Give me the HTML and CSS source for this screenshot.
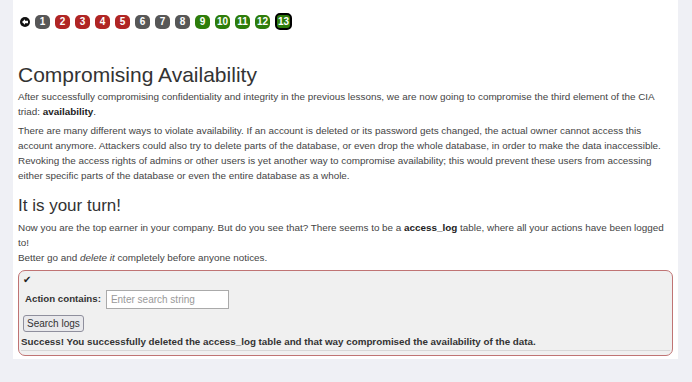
FILE: index.html
```html
<!DOCTYPE html>
<html lang="en">
<head>
  <meta charset="UTF-8">
  <title>Compromising Availability</title>
  <link rel="stylesheet" href="styles.css">
</head>
<body>
  <main class="lesson">
    <nav class="lesson-nav">
      <span class="lesson-nav__back">
        <svg width="10" height="10" viewBox="0 0 10 10"><circle cx="5" cy="5" r="5" fill="#111"/><path d="M2 5 L5 2.2 L5 3.8 L8 3.8 L8 6.2 L5 6.2 L5 7.8 Z" fill="#fff"/></svg>
      </span>
      <span class="step step--grey">1</span>
      <span class="step step--red">2</span>
      <span class="step step--red">3</span>
      <span class="step step--red">4</span>
      <span class="step step--red">5</span>
      <span class="step step--grey">6</span>
      <span class="step step--grey">7</span>
      <span class="step step--grey">8</span>
      <span class="step step--green">9</span>
      <span class="step step--green">10</span>
      <span class="step step--green">11</span>
      <span class="step step--green">12</span>
      <span class="step step--green step--current">13</span>
    </nav>

    <h1 class="lesson-title">Compromising Availability</h1>
    <p>After successfully compromising confidentiality and integrity in the previous lessons, we are now going to compromise the third element of the CIA triad: <b>availability</b>.</p>
    <p>There are many different ways to violate availability. If an account is deleted or its password gets changed, the actual owner cannot access this account anymore. Attackers could also try to delete parts of the database, or even drop the whole database, in order to make the data inaccessible. Revoking the access rights of admins or other users is yet another way to compromise availability; this would prevent these users from accessing either specific parts of the database or even the entire database as a whole.</p>

    <h2 class="lesson-subtitle">It is your turn!</h2>
    <p>Now you are the top earner in your company. But do you see that? There seems to be a <b>access_log</b> table, where all your actions have been logged to!<br>Better go and <i>delete it</i> completely before anyone notices.</p>

    <form class="assignment">
      <div class="assignment__check">&#10004;</div>
      <div class="assignment__row">
        <label for="action">Action contains:</label>
        <input type="text" id="action" name="action" placeholder="Enter search string">
      </div>
      <button type="button" class="assignment__button">Search logs</button>
      <div class="assignment__feedback">Success! You successfully deleted the access_log table and that way compromised the availability of the data.</div>
    </form>
  </main>
</body>
</html>
```

FILE: styles.css
```css
body, html {
  font-family: "Liberation Sans", Arial, sans-serif;
  color: #444;
}

body {
  margin: 0;
  background: #eff0f5;
}

.lesson {
  margin: 0 14px 0 13px;
  padding: 13px 5px 5px 5px;
  background: white;
  height: 341px;
  font-size: 9.9px;
  line-height: 14.7px;
}

.lesson p {
  margin: 0 0 5px 0;
}

.lesson b {
  color: #222;
}

.lesson-nav {
  display: flex;
  align-items: center;
  gap: 5px;
  padding-left: 2px;
}

.lesson-nav__back {
  display: block;
  width: 10px;
  height: 10px;
}

.lesson-nav__back svg {
  display: block;
}

.step {
  display: block;
  min-width: 15px;
  height: 14px;
  padding: 0 1px;
  box-sizing: border-box;
  border-radius: 5px;
  color: white;
  font-weight: bold;
  font-size: 10px;
  line-height: 14px;
  text-align: center;
}

.step--grey {
  background: #575757;
}

.step--red {
  background: #b02524;
}

.step--green {
  background: #2e7d0b;
}

.step--current {
  height: 17px;
  min-width: 17px;
  line-height: 13px;
  border: 2px solid #000;
}

.lesson-title {
  margin: 32px 0 2px 0;
  font-size: 21px;
  line-height: 26px;
  font-weight: normal;
  color: #333;
}

.lesson-subtitle {
  margin: 13px 0 5px 0;
  font-size: 17px;
  line-height: 20px;
  font-weight: normal;
  color: #333;
}

.assignment {
  margin-top: 2px;
  padding: 2px 2px 4px 2px;
  background: #f0f0f0;
  border: 1.5px solid #c07474;
  border-radius: 7px;
}

.assignment__check {
  color: #222;
  font-size: 10px;
  line-height: 14px;
  padding-left: 2px;
}

.assignment__row {
  display: flex;
  align-items: center;
  gap: 5px;
  padding-left: 4px;
  margin-top: 2.5px;
}

.assignment__row label {
  font-weight: bold;
  font-size: 9.7px;
  color: #333;
}

.assignment__row input {
  width: 123px;
  height: 19px;
  box-sizing: border-box;
  border: 1px solid #aaa;
  padding: 0 4px;
  font-family: inherit;
  font-size: 10px;
  background: white;
}

.assignment__row input::placeholder {
  color: #999;
}

.assignment__button {
  display: block;
  margin: 6px 0 0 2px;
  height: 17px;
  padding: 0 3px;
  font-family: inherit;
  font-size: 10px;
  color: #333;
  background: #e9e9ec;
  border: 1px solid #8f8f9d;
  border-radius: 3px;
}

.assignment__feedback {
  margin-top: 2.7px;
  padding-bottom: 1px;
  font-weight: bold;
  font-size: 9.8px;
  color: #333;
  border-bottom: 1px solid #d8d8d8;
}
```
